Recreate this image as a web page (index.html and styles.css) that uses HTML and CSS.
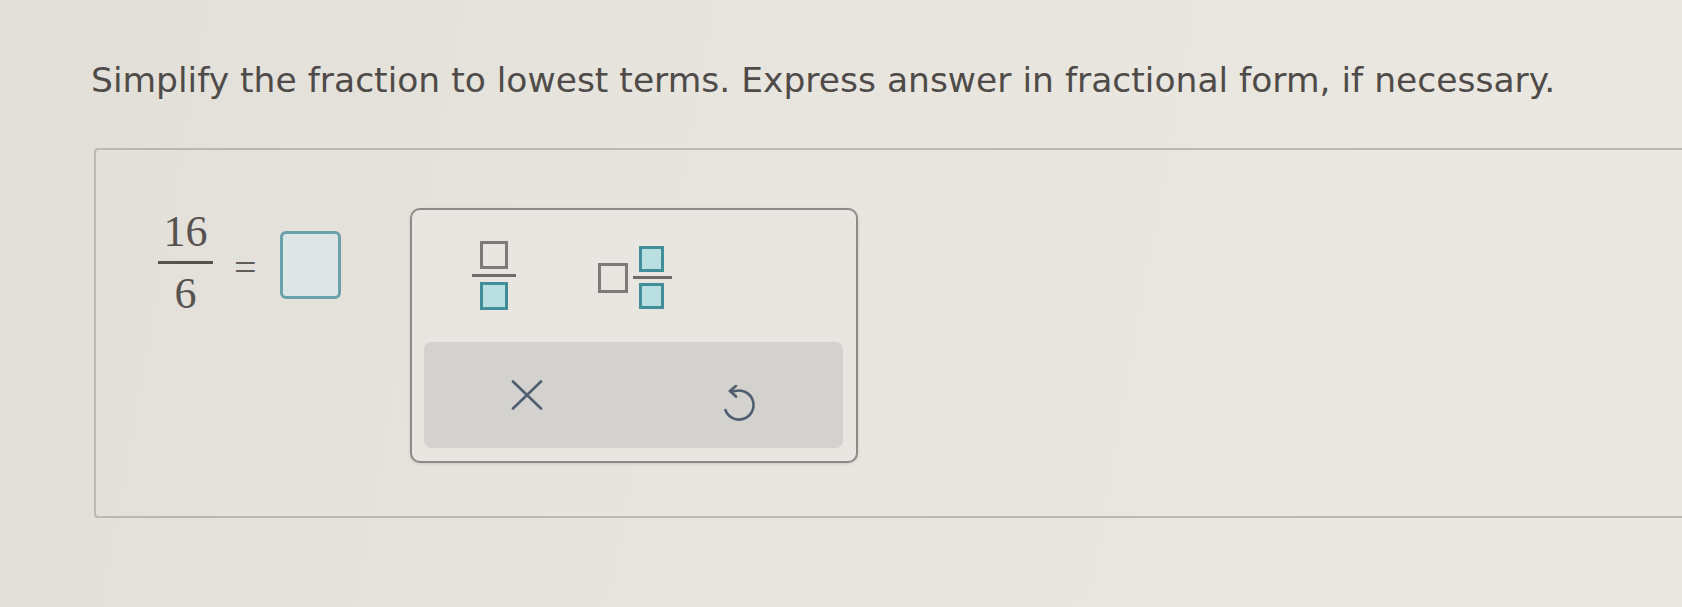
FILE: index.html
```html
<!DOCTYPE html>
<html lang="en">
<head>
<meta charset="utf-8">
<title>Simplify the fraction</title>
<link rel="stylesheet" href="styles.css">
</head>
<body>
<p class="prompt">Simplify the fraction to lowest terms. Express answer in fractional form, if necessary.</p>
<section class="work">
  <div class="expr">
    <div class="frac">
      <span class="num">16</span>
      <span class="bar"></span>
      <span class="den">6</span>
    </div>
    <span class="eq">=</span>
    <span class="answer"></span>
  </div>
  <div class="palette">
    <div class="templates">
      <button class="tpl tpl-frac" type="button" aria-label="fraction">
        <svg width="44" height="72" viewBox="0 0 44 72">
          <rect x="9.5" y="2.5" width="25" height="25" fill="none" stroke="#7d7b79" stroke-width="3"/>
          <rect x="0" y="34" width="44" height="3" fill="#6f6d6b"/>
          <rect x="9.5" y="43.5" width="25" height="25" fill="#b9dfe1" stroke="#3f8e99" stroke-width="3"/>
        </svg>
      </button>
      <button class="tpl tpl-mixed" type="button" aria-label="mixed number">
        <svg width="76" height="66" viewBox="0 0 76 66">
          <rect x="2.5" y="18.5" width="27" height="27" fill="none" stroke="#7d7b79" stroke-width="3"/>
          <rect x="43.5" y="1.5" width="22" height="23" fill="#b9dfe1" stroke="#3f8e99" stroke-width="3"/>
          <rect x="36" y="30" width="39" height="3" fill="#6f6d6b"/>
          <rect x="43.5" y="38.5" width="22" height="23" fill="#b9dfe1" stroke="#3f8e99" stroke-width="3"/>
        </svg>
      </button>
    </div>
    <div class="actions">
      <button class="act" type="button" aria-label="clear">
        <svg width="32" height="30" viewBox="0 0 32 30">
          <path d="M2 1.5 L30 28.5 M30 1.5 L2 28.5" fill="none" stroke="#4f5e70" stroke-width="2.6" stroke-linecap="round"/>
        </svg>
      </button>
      <button class="act act-undo" type="button" aria-label="undo">
        <svg width="36" height="38" viewBox="0 0 36 38">
          <path d="M4.4 25 A 14.5 14.5 0 1 0 14 6.1 L 9 6" fill="none" stroke="#4f5e70" stroke-width="2.6" stroke-linecap="round" stroke-linejoin="round"/>
          <path d="M15 0.8 L 9 6 L 15 11.5" fill="none" stroke="#4f5e70" stroke-width="2.6" stroke-linecap="round" stroke-linejoin="round"/>
        </svg>
      </button>
    </div>
  </div>
</section>
</body>
</html>
```

FILE: styles.css
```css
html, body {
  margin: 0;
  padding: 0;
}

body {
  width: 1682px;
  height: 607px;
  overflow: hidden;
  background: linear-gradient(100deg, #e2dfd9 0%, #e8e5df 45%, #ebe8e2 100%);
  font-family: "DejaVu Sans", Verdana, sans-serif;
  color: #57524f;
}

.prompt {
  margin: 0;
  padding: 60px 0 0 91px;
  font-size: 34.5px;
  line-height: 40px;
  white-space: nowrap;
  color: #4f4b48;
}

.work {
  margin: 48px -20px 0 94px;
  height: 370px;
  border: 2px solid #bcb9b3;
  border-right: none;
  border-radius: 4px 0 0 4px;
  display: flex;
  align-items: flex-start;
  box-sizing: border-box;
}

.expr {
  display: flex;
  align-items: flex-start;
  margin: 60px 0 0 62px;
}

.frac {
  display: flex;
  flex-direction: column;
  align-items: center;
  width: 55px;
  font-family: "Liberation Serif", "Times New Roman", serif;
  font-size: 44px;
  line-height: 44px;
  color: #57524f;
}

.frac .bar {
  display: block;
  width: 55px;
  height: 3px;
  background: #57524f;
  margin: 7px 0 8px;
}

.eq {
  margin: 38px 0 0 21px;
  font-family: "Liberation Serif", "Times New Roman", serif;
  font-size: 40px;
  line-height: 40px;
  color: #605d5b;
}

.answer {
  display: block;
  width: 61px;
  height: 68px;
  margin: 21px 0 0 23px;
  box-sizing: border-box;
  border: 3px solid #6aa1ab;
  border-radius: 6px;
  background: #dde5e5;
}

.palette {
  margin: 58px 0 0 69px;
  width: 448px;
  height: 255px;
  box-sizing: border-box;
  border: 2px solid #8c8b89;
  border-radius: 10px;
  background: #e9e6e1;
  box-shadow: 0 1px 3px rgba(0, 0, 0, 0.12);
  display: flex;
  flex-direction: column;
}

.templates {
  display: flex;
  align-items: flex-start;
  height: 132px;
  padding: 0 0 0 60px;
  box-sizing: border-box;
}

.tpl {
  border: none;
  background: none;
  padding: 0;
  margin: 0;
  display: block;
}

.tpl svg {
  display: block;
}

.tpl-frac {
  margin-top: 30px;
}

.tpl-mixed {
  margin: 36px 0 0 81px;
}

.actions {
  margin: 0 13px 13px 12px;
  height: 106px;
  background: #d3d2cf;
  border-radius: 7px;
  display: flex;
}

.act {
  flex: 1;
  border: none;
  background: none;
  padding: 0;
  display: flex;
  align-items: center;
  justify-content: center;
}

.act svg {
  display: block;
}

.act-undo {
  padding: 18px 0 0 4px;
}
```
